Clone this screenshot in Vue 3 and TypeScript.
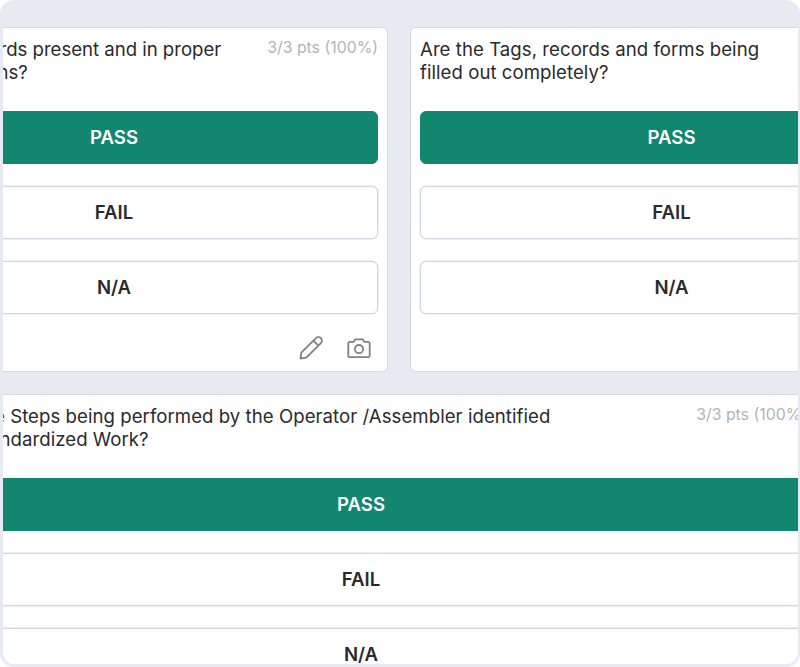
<script setup lang="ts">
interface Line {
  text: string
  offset: number
}
interface Question {
  id: string
  lines: Line[]
  points?: string
  tools?: boolean
}

const options = ['PASS', 'FAIL', 'N/A']

const topRow: Question[] = [
  {
    id: 'boards',
    lines: [
      { text: 'rds present and in proper', offset: 149.5 },
      { text: 'ns?', offset: 147.5 },
    ],
    points: '3/3 pts (100%)',
    tools: true,
  },
  {
    id: 'tags',
    lines: [
      { text: 'Are the Tags, records and forms being', offset: 0 },
      { text: 'filled out completely?', offset: 0 },
    ],
  },
]

const bottomRow: Question[] = [
  {
    id: 'steps',
    lines: [
      { text: 'e Steps being performed by the Operator /Assembler identified', offset: 79 },
      { text: 'ndardized Work?', offset: 84.5 },
    ],
    points: '3/3 pts (100%)',
  },
]

const rows = [topRow, bottomRow]
</script>

<template>
  <main class="frame">
    <div class="board">
      <section v-for="(row, r) in rows" :key="r" class="row" :class="`row-${r + 1}`">
        <article v-for="q in row" :key="q.id" class="card" :class="q.id">
          <header class="head">
            <h2 class="title">
              <span
                v-for="line in q.lines"
                :key="line.text"
                class="line"
                :style="{ marginLeft: line.offset + 'px' }"
              >{{ line.text }}</span>
            </h2>
            <span v-if="q.points" class="points">{{ q.points }}</span>
          </header>
          <div class="options">
            <button
              v-for="(option, i) in options"
              :key="option"
              type="button"
              class="option"
              :class="{ selected: i === 0 }"
            >{{ option }}</button>
          </div>
          <footer v-if="q.tools" class="tools">
            <svg class="icon" viewBox="0 0 24 24">
              <path d="M1.5 22.5 2.3 16.7 16.9 2.1a3.5 3.5 0 0 1 5 5L7.3 21.7ZM14.4 4.6l5 5" />
            </svg>
            <svg class="icon" viewBox="0 0 24 24">
              <path d="M2.8 5.9H6.6L8.3 3.3h7.4l1.7 2.6h3.8a1.5 1.5 0 0 1 1.5 1.5v12.3a1.5 1.5 0 0 1-1.5 1.5H2.8a1.5 1.5 0 0 1-1.5-1.5V7.4a1.5 1.5 0 0 1 1.5-1.5Z" />
              <circle cx="12" cy="13.1" r="4.1" />
            </svg>
          </footer>
        </article>
      </section>
    </div>
  </main>
</template>

<style>
body {
  margin: 0;
  background: #fff;
}
</style>

<style scoped>
.frame {
  box-sizing: border-box;
  width: 800px;
  height: 667px;
  padding: 0 2px 3px 3px;
  overflow: hidden;
  border-radius: 14px;
  background: #e7eaf3;
  font-family: Inter, 'Liberation Sans', sans-serif;
  color: #2a2a2c;
}
.board {
  box-sizing: border-box;
  height: 664px;
  padding-top: 27px;
  overflow: hidden;
  border-radius: 0 0 12px 12px;
}
.row {
  display: flex;
  gap: 22px;
  margin-bottom: 22px;
}
.row-1 {
  margin-left: -163px;
}
.row-2 {
  margin-left: -98px;
}
.card {
  box-sizing: border-box;
  flex: none;
  height: 345px;
  padding: 10px 9px 0;
  border: 1px solid #d5d9e5;
  border-radius: 6px;
  background: #fff;
}
.boards {
  width: 548px;
}
.tags {
  width: 523px;
}
.steps {
  width: 912px;
}
.head {
  display: flex;
  justify-content: space-between;
  height: 73px;
}
.title {
  margin: 0;
  font-size: 18.6px;
  font-weight: 400;
  line-height: 22.6px;
  letter-spacing: 0.05px;
  white-space: nowrap;
}
.boards .title {
  letter-spacing: -0.02px;
}
.line {
  display: block;
}
.points {
  font-size: 15.85px;
  line-height: 20px;
  color: #b1b4b9;
  white-space: nowrap;
}
.options {
  display: flex;
  flex-direction: column;
  gap: 21.5px;
}
.option {
  box-sizing: border-box;
  height: 53.3px;
  padding: 0;
  border: 1px solid #d3d7e4;
  border-radius: 6px;
  background: #fff;
  box-shadow: 0 0 0 0.5px #dfe2ec;
  color: #2a2a2c;
  font-family: inherit;
  font-size: 18.6px;
  font-weight: 600;
}
.option.selected {
  padding-bottom: 1px;
  border-color: #12866e;
  background: #12866e;
  box-shadow: none;
  color: #fff;
}
.tools {
  display: flex;
  justify-content: flex-end;
  gap: 24px;
  padding: 22px 7px 0;
}
.icon {
  width: 24px;
  height: 24px;
  fill: none;
  stroke: #808184;
  stroke-width: 1.8;
  stroke-linejoin: round;
  stroke-linecap: round;
}
</style>
